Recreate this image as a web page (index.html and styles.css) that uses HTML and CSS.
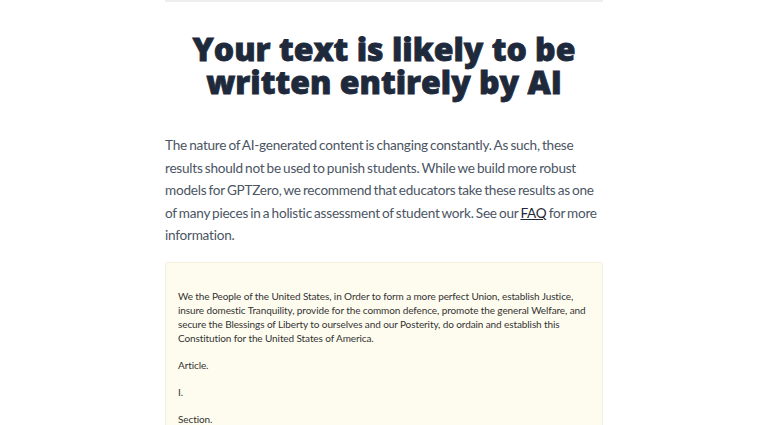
FILE: index.html
```html
<!DOCTYPE html>
<html lang="en">
<head>
<meta charset="utf-8">
<title>GPTZero result</title>
<link rel="stylesheet" href="styles.css">
</head>
<body>
<main class="page">
  <div class="topbar"></div>
  <h1 class="title">Your text is likely to be written entirely by AI</h1>
  <p class="notice">The nature of AI-generated content is changing constantly. As such, these results should not be used to punish students. While we build more robust models for GPTZero, we recommend that educators take these results as one of many pieces in a holistic assessment of student work. See our <a class="link" href="#">FAQ</a> for more information.</p>
  <div class="doc">
<p class="doc-p">We the People of the United States, in Order to form a more perfect Union, establish Justice, insure domestic Tranquility, provide for the common defence, promote the general Welfare, and secure the Blessings of Liberty to ourselves and our Posterity, do ordain and establish this Constitution for the United States of America.</p>
<p class="doc-p">Article.</p>
<p class="doc-p">I.</p>
<p class="doc-p">Section.</p>
<p class="doc-p">1.</p>
  </div>
</main>
</body>
</html>
```

FILE: styles.css
```css
html, body {
  margin: 0;
  padding: 0;
  background: #ffffff;
}
body {
  font-family: "Lato", "Open Sans", "Liberation Sans", sans-serif;
  overflow: hidden;
}
.page {
  width: 438px;
  margin: 0 auto;
  display: flex;
  flex-direction: column;
}
.topbar {
  height: 2px;
  background: #eeeeee;
}
.title {
  margin: 30px 0 0;
  text-align: center;
  font-family: "Open Sans", sans-serif;
  font-weight: 800;
  font-size: 32px;
  line-height: 33px;
  color: #1e293b;
  -webkit-text-stroke: 0.8px #1e293b;
}
.notice {
  margin: 36px 0 0;
  font-size: 13.6px;
  letter-spacing: -0.25px;
  word-spacing: -1px;
  line-height: 22.5px;
  color: #4b5563;
}
.link {
  color: #1f2937;
  text-decoration: underline;
}
.doc {
  margin-top: 15px;
  background: #fefcef;
  border: 1px solid #f4f0dc;
  border-radius: 2px;
  padding: 26px 12px 12px;
  color: #333333;
  font-size: 10px;
  letter-spacing: -0.1px;
  line-height: 14px;
}
.doc-p {
  margin: 0 0 13px;
}
```
